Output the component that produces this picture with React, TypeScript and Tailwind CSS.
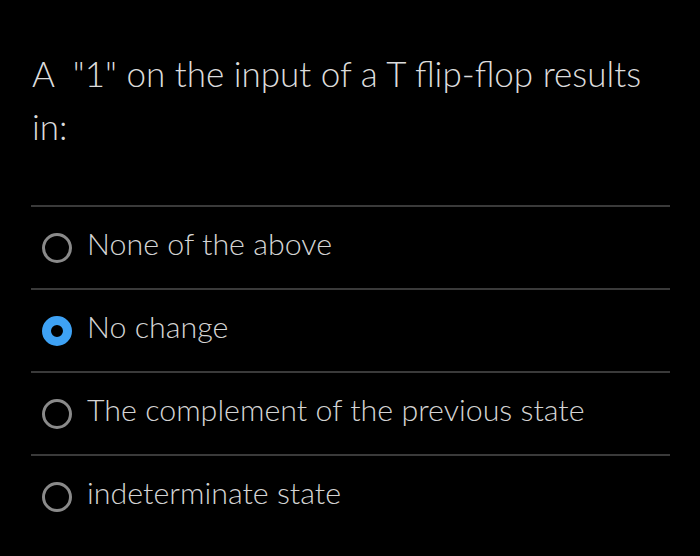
import React from "react";

const options = [
  { label: "None of the above", selected: false },
  { label: "No change", selected: true },
  { label: "The complement of the previous state", selected: false },
  { label: "indeterminate state", selected: false },
];

export default function App() {
  return (
    <div
      className="w-[700px] h-[556px] bg-black overflow-hidden"
      style={{ fontFamily: "Lato, 'Noto Sans', sans-serif" }}
    >
      <div className="pl-[32px] pr-[30px] pt-[47px] text-[35px] leading-[53px] font-light text-[#dcdcdc]">
        A&nbsp; "1" on the input of a T flip-flop results in:
      </div>
      <div className="mt-[52px] ml-[31px] w-[639px]">
        {options.map((o, i) => (
          <div key={i} className="border-t-2 border-[#3a3a3a] h-[83px] flex items-center gap-[15px] pl-[11px]">
            {o.selected ? (
              <div className="w-[30px] h-[30px] rounded-full border-[9px] border-[#3ea2f5] bg-black" />
            ) : (
              <div className="w-[30px] h-[30px] rounded-full border-[3px] border-[#8a8a8a]" />
            )}
            <span className="text-[30.4px] font-light text-[#d4d4d4] leading-none pb-[8px]">{o.label}</span>
          </div>
        ))}
      </div>
    </div>
  );
}
